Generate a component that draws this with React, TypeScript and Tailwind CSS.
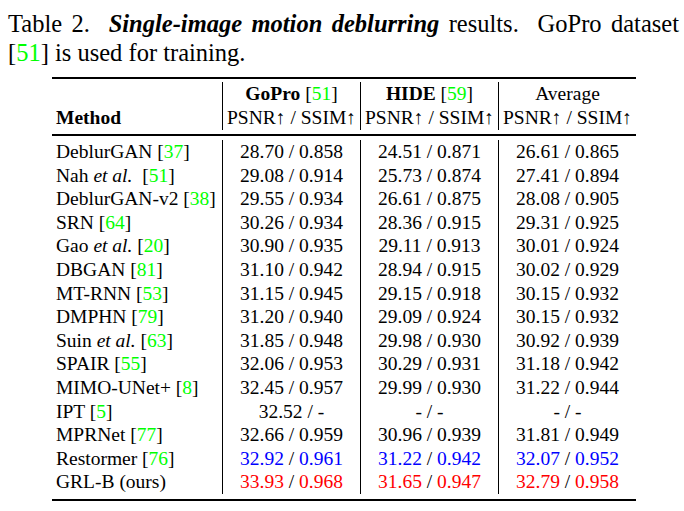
import React from "react";

type Cell = { a: string; b: string; c?: "blue" | "red" };
type Row = { name: React.ReactNode; cells: Cell[] };

const G = ({ n }: { n: string }) => (
  <>
    [<span className="text-[#00ff00]">{n}</span>]
  </>
);

const rows: Row[] = [
  { name: <>DeblurGAN <G n="37" /></>, cells: [{ a: "28.70", b: "0.858" }, { a: "24.51", b: "0.871" }, { a: "26.61", b: "0.865" }] },
  { name: <>Nah <i>et al.</i>&nbsp; <G n="51" /></>, cells: [{ a: "29.08", b: "0.914" }, { a: "25.73", b: "0.874" }, { a: "27.41", b: "0.894" }] },
  { name: <>DeblurGAN-v2 <G n="38" /></>, cells: [{ a: "29.55", b: "0.934" }, { a: "26.61", b: "0.875" }, { a: "28.08", b: "0.905" }] },
  { name: <>SRN <G n="64" /></>, cells: [{ a: "30.26", b: "0.934" }, { a: "28.36", b: "0.915" }, { a: "29.31", b: "0.925" }] },
  { name: <>Gao <i>et al.</i> <G n="20" /></>, cells: [{ a: "30.90", b: "0.935" }, { a: "29.11", b: "0.913" }, { a: "30.01", b: "0.924" }] },
  { name: <>DBGAN <G n="81" /></>, cells: [{ a: "31.10", b: "0.942" }, { a: "28.94", b: "0.915" }, { a: "30.02", b: "0.929" }] },
  { name: <>MT-RNN <G n="53" /></>, cells: [{ a: "31.15", b: "0.945" }, { a: "29.15", b: "0.918" }, { a: "30.15", b: "0.932" }] },
  { name: <>DMPHN <G n="79" /></>, cells: [{ a: "31.20", b: "0.940" }, { a: "29.09", b: "0.924" }, { a: "30.15", b: "0.932" }] },
  { name: <>Suin <i>et al.</i> <G n="63" /></>, cells: [{ a: "31.85", b: "0.948" }, { a: "29.98", b: "0.930" }, { a: "30.92", b: "0.939" }] },
  { name: <>SPAIR <G n="55" /></>, cells: [{ a: "32.06", b: "0.953" }, { a: "30.29", b: "0.931" }, { a: "31.18", b: "0.942" }] },
  { name: <>MIMO-UNet+ <G n="8" /></>, cells: [{ a: "32.45", b: "0.957" }, { a: "29.99", b: "0.930" }, { a: "31.22", b: "0.944" }] },
  { name: <>IPT <G n="5" /></>, cells: [{ a: "32.52", b: "-" }, { a: "-", b: "-" }, { a: "-", b: "-" }] },
  { name: <>MPRNet <G n="77" /></>, cells: [{ a: "32.66", b: "0.959" }, { a: "30.96", b: "0.939" }, { a: "31.81", b: "0.949" }] },
  { name: <>Restormer <G n="76" /></>, cells: [{ a: "32.92", b: "0.961", c: "blue" }, { a: "31.22", b: "0.942", c: "blue" }, { a: "32.07", b: "0.952", c: "blue" }] },
  { name: <>GRL-B (ours)</>, cells: [{ a: "33.93", b: "0.968", c: "red" }, { a: "31.65", b: "0.947", c: "red" }, { a: "32.79", b: "0.958", c: "red" }] },
];

const colorCls = (c?: "blue" | "red") =>
  c === "blue" ? "text-[#0000ff]" : c === "red" ? "text-[#ff0000]" : "";

const Metric = () => <>PSNR↑ / SSIM↑</>;

export default function App() {
  return (
    <div
      className="w-[684px] h-[511px] bg-white text-black overflow-hidden"
      style={{ fontFamily: '"Liberation Serif", "Times New Roman", serif' }}
    >
      <div className="ml-[8px] w-[671px] pt-[9px] text-[24.5px] leading-[29px]">
        <div className="whitespace-nowrap text-justify [text-align-last:justify]">
          Table 2.&nbsp; <b className="italic">Single-image motion deblurring</b> results.&nbsp; GoPro dataset
        </div>
        <div className="whitespace-nowrap">
          <G n="51" /> is used for training.
        </div>
      </div>

      <div className="ml-[52px] mt-[10px] w-[584px] text-[19.5px]">
        <div className="h-[2px] bg-black" />
        <div className="pt-[3px] pb-[4px]">
          <div className="grid grid-cols-[170px_138px_138px_138px] leading-[24px] whitespace-nowrap">
            <div className="pl-[4px] flex flex-col">
              <div className="h-[24px]" />
              <div className="font-bold">Method</div>
            </div>
            <div className="border-l border-black text-center">
              <div><b>GoPro</b> <G n="51" /></div>
              <div><Metric /></div>
            </div>
            <div className="border-l border-black text-center">
              <div><b>HIDE</b> <G n="59" /></div>
              <div><Metric /></div>
            </div>
            <div className="border-l border-black text-center">
              <div>Average</div>
              <div><Metric /></div>
            </div>
          </div>
        </div>
        <div className="h-[2px] bg-black" />
        <div className="pt-[4px] pb-[5px]">
          <div className="grid grid-cols-[170px_138px_138px_138px] leading-[23.6px] whitespace-nowrap">
            <div className="pl-[4px]">
              {rows.map((r, i) => (
                <div key={i}>{r.name}</div>
              ))}
            </div>
            {[0, 1, 2].map((ci) => (
              <div key={ci} className="border-l border-black text-center">
                {rows.map((r, i) => {
                  const cell = r.cells[ci];
                  const cc = colorCls(cell.c);
                  return (
                    <div key={i}>
                      <span className={cc}>{cell.a}</span> / <span className={cc}>{cell.b}</span>
                    </div>
                  );
                })}
              </div>
            ))}
          </div>
        </div>
        <div className="h-[2px] bg-black" />
      </div>
    </div>
  );
}
